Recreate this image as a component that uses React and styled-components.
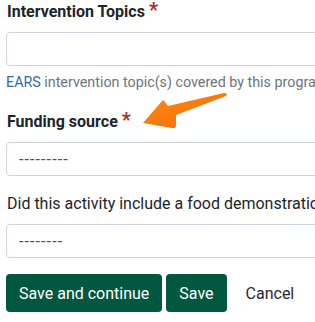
import styled, { createGlobalStyle } from "styled-components";

const Global = createGlobalStyle`
  * { box-sizing: border-box; }
  body {
    margin: 0;
    background: #fff;
    font-family: Roboto, "Liberation Sans", sans-serif;
    color: #212529;
  }
`;

const Page = styled.div`
  position: relative;
  width: 315px;
  height: 322px;
  overflow: hidden;
  padding-left: 6px;
`;

const Field = styled.div`
  width: 340px;
  margin-bottom: ${(p) => p.$mb || 0}px;
`;

const Label = styled.div`
  font-size: 16px;
  line-height: 24px;
  font-weight: ${(p) => (p.$bold ? 700 : 400)};
  padding-left: 1px;
  margin-bottom: 8px;
  white-space: nowrap;
`;

const Required = styled.span`
  color: #a3322b;
  margin-left: 4px;
  font-size: 20px;
  line-height: 0;
`;

const Box = styled.div`
  height: 34px;
  border: 1px solid #ced4da;
  border-radius: 4px;
  display: flex;
  align-items: center;
  padding-left: 12px;
  font-size: 16px;
  letter-spacing: 1.1px;
  color: #495057;
`;

const Help = styled.div`
  margin-top: 6px;
  font-size: 14.3px;
  line-height: 21px;
  color: #6c757d;
  white-space: nowrap;
`;

const HelpLink = styled.span`
  color: #2f6ca4;
`;

const Actions = styled.div`
  display: flex;
  align-items: center;
  gap: 4px;
`;

const Button = styled.button`
  height: 38px;
  padding: 0 13px;
  border: none;
  border-radius: 4px;
  background: #02573f;
  color: #fff;
  font-family: inherit;
  font-size: 16px;
`;

const Cancel = styled.span`
  font-size: 16px;
  margin-left: 15px;
  color: #1f2a37;
`;

const Arrow = styled.svg`
  position: absolute;
  left: 0;
  top: 0;
  pointer-events: none;
`;

export default function App() {
  return (
    <Page>
      <Global />
      <Field $mb={17}>
        <Label $bold>
          Intervention Topics<Required>*</Required>
        </Label>
        <Box />
        <Help>
          <HelpLink>EARS</HelpLink> intervention topic(s) covered by this program
        </Help>
      </Field>
      <Field $mb={16}>
        <Label $bold>
          Funding source<Required>*</Required>
        </Label>
        <Box>---------</Box>
      </Field>
      <Field $mb={16}>
        <Label>Did this activity include a food demonstration?</Label>
        <Box>--------</Box>
      </Field>
      <Actions>
        <Button>Save and continue</Button>
        <Button>Save</Button>
        <Cancel>Cancel</Cancel>
      </Actions>
      <Arrow width="315" height="322" viewBox="0 0 315 322">
        <defs>
          <linearGradient id="og" x1="0" y1="0" x2="1" y2="1">
            <stop offset="0" stopColor="#ff8a1a" />
            <stop offset="1" stopColor="#f06a00" />
          </linearGradient>
        </defs>
        <path
          d="M143 123 L162 101 Q164 99 165 102 L168 106 L224 93 Q228 93 226 96 L176 115 L176 125 Q176 129 172 128 Z"
          fill="url(#og)"
          strokeLinejoin="round"
        />
      </Arrow>
    </Page>
  );
}
